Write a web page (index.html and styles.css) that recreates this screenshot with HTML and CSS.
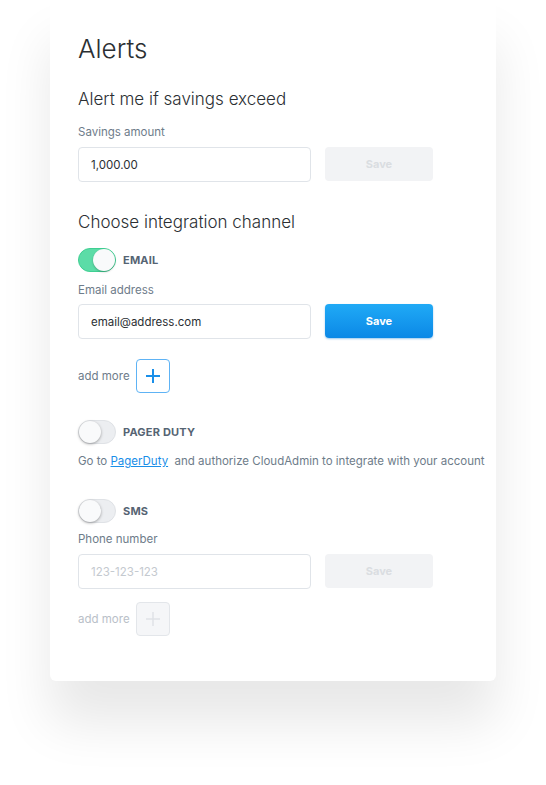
FILE: index.html
```html
<!DOCTYPE html>
<html lang="en">
<head>
    <meta charset="UTF-8">
    <title>Alerts</title>
    <link rel="stylesheet" href="styles.css">
</head>
<body>
<div class="card">
    <h1 class="card__title">Alerts</h1>

    <h2 class="section__title">Alert me if savings exceed</h2>
    <div class="field__label">Savings amount</div>
    <div class="field">
        <input class="field__input" type="text" value="1,000.00">
        <button class="btn btn--disabled">Save</button>
    </div>

    <h2 class="section__title section__title--channel">Choose integration channel</h2>

    <div class="switch is-checked">
        <span class="switch__core"></span>
        <span class="switch__label">EMAIL</span>
    </div>
    <div class="field__label field__label--tight">Email address</div>
    <div class="field field--tight">
        <input class="field__input" type="text" value="email@address.com">
        <button class="btn btn--primary">Save</button>
    </div>
    <div class="add-more">
        <span class="add-more__text">add more</span>
        <span class="add-more__btn">
            <svg width="16" height="16" viewBox="0 0 16 16"><path d="M8 1v14M1 8h14" stroke="currentColor" stroke-width="2" fill="none"/></svg>
        </span>
    </div>

    <div class="switch switch--pager">
        <span class="switch__core"></span>
        <span class="switch__label">PAGER DUTY</span>
    </div>
    <p class="note">Go to <a href="#">PagerDuty</a>&nbsp; and authorize CloudAdmin to integrate with your account</p>

    <div class="switch switch--sms">
        <span class="switch__core"></span>
        <span class="switch__label">SMS</span>
    </div>
    <div class="field__label field__label--phone">Phone number</div>
    <div class="field">
        <input class="field__input" type="text" placeholder="123-123-123">
        <button class="btn btn--disabled">Save</button>
    </div>
    <div class="add-more add-more--disabled">
        <span class="add-more__text">add more</span>
        <span class="add-more__btn">
            <svg width="16" height="16" viewBox="0 0 16 16"><path d="M8 1v14M1 8h14" stroke="currentColor" stroke-width="1.5" fill="none"/></svg>
        </span>
    </div>
</div>
</body>
</html>
```

FILE: styles.css
```css
* {
    box-sizing: border-box;
}
body {
    margin: 0;
    background: #fff;
    font-family: Inter, "Noto Sans", sans-serif;
    color: #2d3136;
    height: 785px;
    overflow: hidden;
}
.card {
    margin-left: 50px;
    width: 446px;
    background: #fff;
    border-radius: 0 0 6px 6px;
    padding: 32px 28px 45px;
    box-shadow: 0 42px 52px rgba(0, 0, 0, 0.095);
}
.card__title {
    margin: 0;
    font-size: 26px;
    line-height: 34px;
    font-weight: 300;
    color: #2b2f33;
}
.section__title {
    margin: 21px 0 0;
    font-size: 17px;
    line-height: 24px;
    font-weight: 300;
    color: #2b2f33;
}
.section__title--channel {
    margin-top: 28px;
}
.field__label {
    margin-top: 12px;
    font-size: 11.5px;
    line-height: 18px;
    color: #6e7c8a;
}
.field__label--tight {
    margin-top: 9px;
}
.field__label--phone {
    margin-top: 7px;
}
.field {
    display: flex;
    gap: 14px;
    margin-top: 6px;
}
.field--tight {
    margin-top: 5px;
}
.field__input {
    width: 233px;
    height: 35px;
    border: 1px solid #e0e4e9;
    border-radius: 4px;
    padding: 0 12px;
    font-family: inherit;
    font-size: 11.5px;
    color: #2b2f33;
    outline: none;
}
.field__input::placeholder {
    color: #c4c9cf;
}
.btn {
    width: 108px;
    height: 34px;
    border: none;
    border-radius: 4px;
    font-family: inherit;
    font-size: 11px;
    font-weight: 700;
}
.btn--disabled {
    background: #f2f3f5;
    color: #dadde1;
}
.btn--primary {
    background: linear-gradient(#20aaf6, #0b88e6);
    color: #fff;
    box-shadow: 0 1px 2px rgba(11, 120, 210, 0.4);
}
.switch {
    display: flex;
    align-items: center;
    gap: 7px;
    margin-top: 14px;
}
.switch--pager {
    margin-top: 27px;
}
.switch--sms {
    margin-top: 29px;
}
.switch__core {
    position: relative;
    width: 38px;
    height: 24px;
    border-radius: 12px;
    background: #eceef1;
    border: 1px solid #dfe2e6;
}
.switch__core:after {
    content: "";
    position: absolute;
    top: 0;
    left: 0;
    width: 22px;
    height: 22px;
    border-radius: 50%;
    background: #f9fafb;
    box-shadow: 0 1px 3px rgba(0, 0, 0, 0.35);
}
.switch.is-checked .switch__core {
    background: #5cdca7;
    border-color: #3fcf92;
}
.switch.is-checked .switch__core:after {
    left: 14px;
    box-shadow: 0 1px 2px rgba(0, 0, 0, 0.25);
}
.switch__label {
    font-size: 11px;
    font-weight: 700;
    color: #566473;
    letter-spacing: 0.2px;
}
.add-more {
    display: flex;
    align-items: center;
    gap: 6px;
    margin-top: 20px;
}
.add-more__text {
    font-size: 11.5px;
    color: #6e7c8a;
}
.add-more__btn {
    display: flex;
    align-items: center;
    justify-content: center;
    width: 34px;
    height: 34px;
    border: 1px solid #5eb3f5;
    border-radius: 4px;
    color: #1a8fe9;
}
.add-more--disabled {
    margin-top: 13px;
}
.add-more--disabled .add-more__text {
    color: #b9c0c8;
}
.add-more--disabled .add-more__btn {
    background: #f5f6f8;
    border-color: #e3e6ea;
    color: #dfe2e6;
}
.note {
    margin: 8px 0 0;
    font-size: 11.5px;
    line-height: 18px;
    color: #6e7c8a;
    white-space: nowrap;
}
.note a {
    color: #1a8ee8;
}
```
